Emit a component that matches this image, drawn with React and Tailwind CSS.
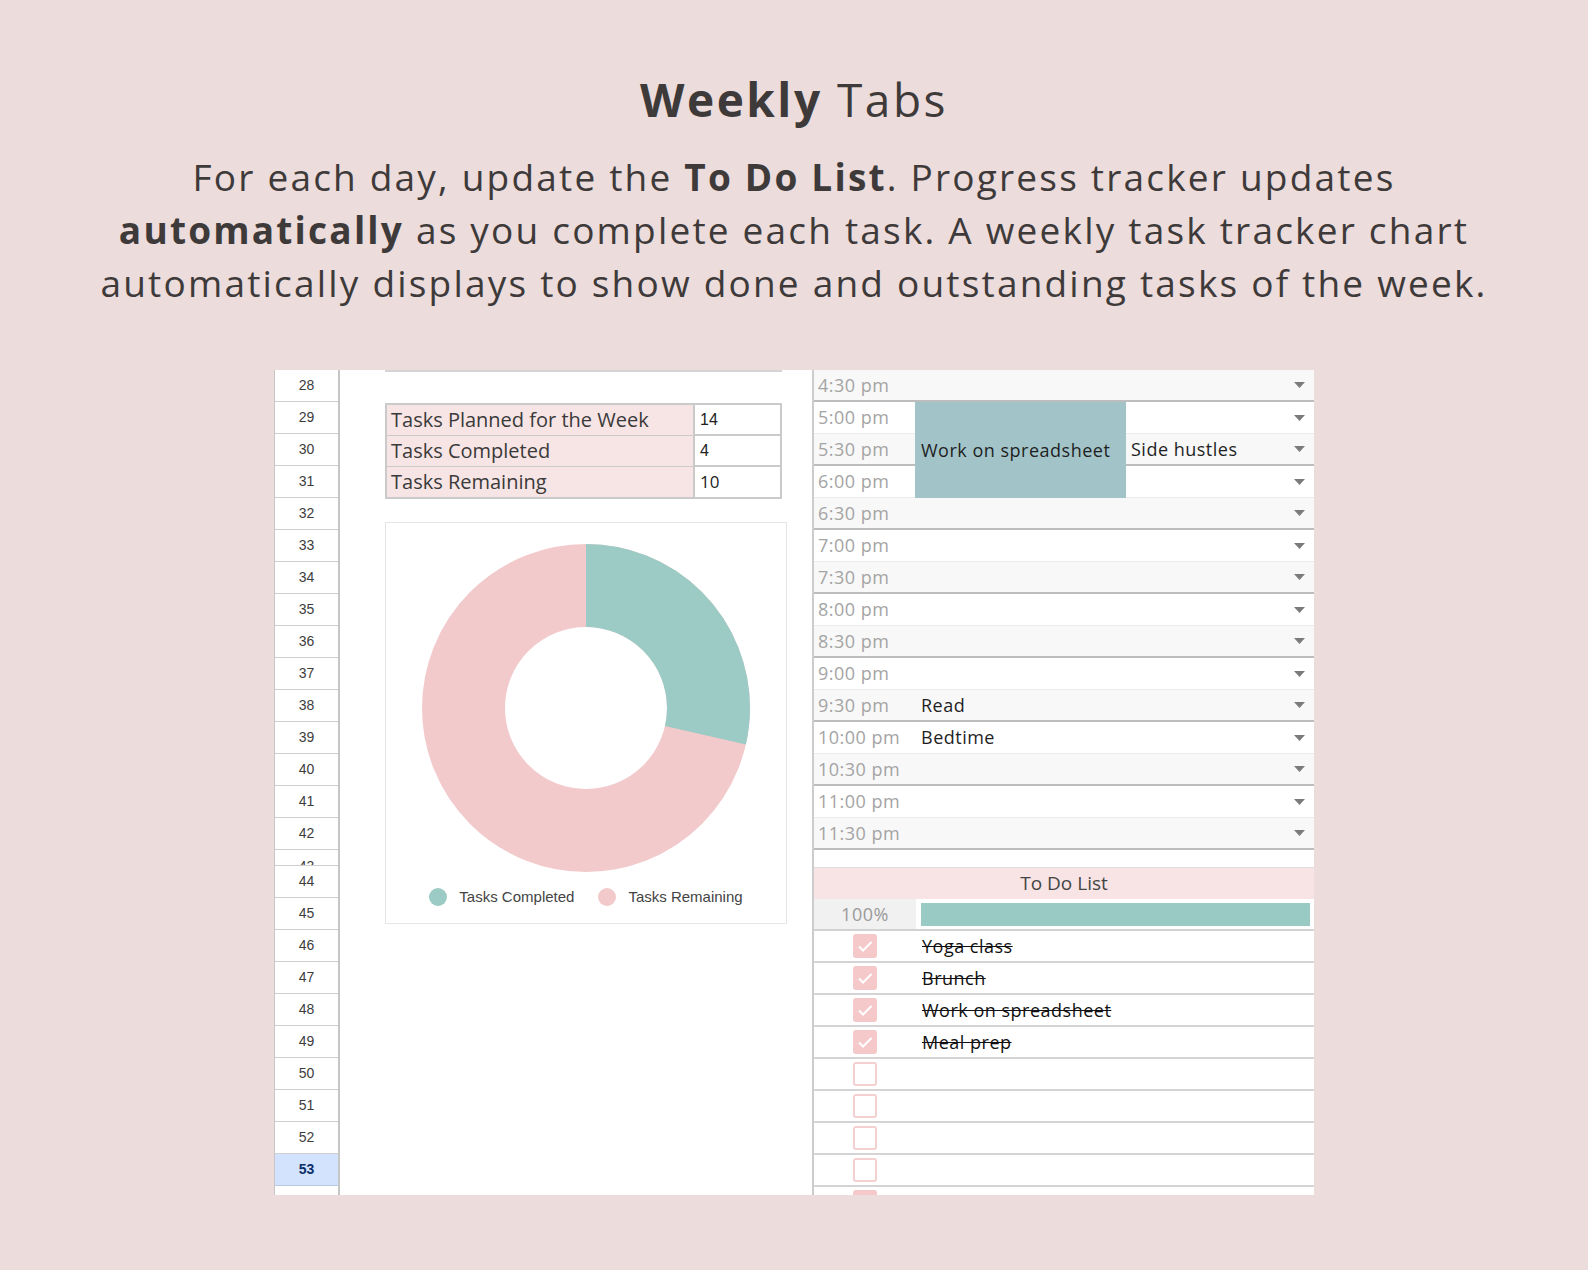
import React from "react";

const heading = { fontFamily: '"Open Sans", "Noto Sans", sans-serif' };
const sheetFont = { fontFamily: '"Open Sans", "Noto Sans", sans-serif' };
const arial = { fontFamily: '"Liberation Sans", Arial, sans-serif' };

const times = [
  "4:30 pm",
  "5:00 pm",
  "5:30 pm",
  "6:00 pm",
  "6:30 pm",
  "7:00 pm",
  "7:30 pm",
  "8:00 pm",
  "8:30 pm",
  "9:00 pm",
  "9:30 pm",
  "10:00 pm",
  "10:30 pm",
  "11:00 pm",
  "11:30 pm",
];

const tasks = { "9:30 pm": "Read", "10:00 pm": "Bedtime" };

const todos = [
  { text: "Yoga class", done: true },
  { text: "Brunch", done: true },
  { text: "Work on spreadsheet", done: true },
  { text: "Meal prep", done: true },
  { text: "", done: false },
  { text: "", done: false },
  { text: "", done: false },
  { text: "", done: false },
  { text: "", done: true },
];

function rowCls(time) {
  return time.includes(":30")
    ? "h-[32px] shrink-0 flex items-center bg-[#f8f8f8] border-b-2 border-[#bdbdbd]"
    : "h-[32px] shrink-0 flex items-center bg-white border-b border-[#ececec]";
}

function Arrow() {
  return (
    <svg width="11" height="6" viewBox="0 0 11 6" className="shrink-0 mr-[9px]">
      <path d="M0 0h11L5.5 6z" fill="#7b7b7b" />
    </svg>
  );
}

function RowHeaders() {
  const first = [];
  for (let n = 28; n <= 42; n++) first.push(n);
  const second = [];
  for (let n = 44; n <= 53; n++) second.push(n);
  return (
    <div
      className="w-[66px] shrink-0 flex flex-col border-l border-r-2 border-[#c6c6c6] text-[14px] text-[#3d3d3d]"
      style={arial}
    >
      {first.map((n) => (
        <div key={n} className="h-[32px] shrink-0 flex items-center justify-center border-b border-[#cfcfcf] bg-white">
          {n}
        </div>
      ))}
      <div className="h-[16px] shrink-0 overflow-hidden border-b border-[#cfcfcf] bg-white flex justify-center pt-[6px]">
        43
      </div>
      {second.map((n) =>
        n === 53 ? (
          <div key={n} className="h-[32px] shrink-0 flex items-center justify-center border-b border-[#b9c9e0] bg-[#d3e3fd] font-bold text-[#0b2f6b]">
            {n}
          </div>
        ) : (
          <div key={n} className="h-[32px] shrink-0 flex items-center justify-center border-b border-[#cfcfcf] bg-white">
            {n}
          </div>
        )
      )}
      <div className="flex-1 bg-white" />
    </div>
  );
}

function Donut() {
  const r = 122.5;
  const c = 2 * Math.PI * r;
  const done = (c * 4) / 14;
  return (
    <svg width="330" height="330" viewBox="0 0 330 330" className="mt-[20px] shrink-0">
      <circle cx="165" cy="165" r={r} fill="none" stroke="#f2cacc" strokeWidth="83" />
      <circle
        cx="165"
        cy="165"
        r={r}
        fill="none"
        stroke="#9bcbc4"
        strokeWidth="83"
        strokeDasharray={`${done} ${c}`}
        transform="rotate(-90 165 165)"
      />
    </svg>
  );
}

function LeftPanel() {
  const rows = [
    ["Tasks Planned for the Week", "14", arial, "text-[16px]"],
    ["Tasks Completed", "4", arial, "text-[16px]"],
    ["Tasks Remaining", "10", sheetFont, "text-[17px]"],
  ];
  return (
    <div className="w-[472px] shrink-0 flex flex-col bg-white" style={sheetFont}>
      <div className="ml-[45px] w-[397px] h-[2px] shrink-0 bg-[#d4d4d4]" />
      <div className="ml-[45px] mt-[31px] w-[397px] shrink-0 border-2 border-[#cacaca]">
        {rows.map(([label, val, font, size], i) => (
          <div
            key={label}
            className={
              i < 2
                ? "h-[31px] grid grid-cols-[308px_1fr] border-b-2 border-[#cacaca]"
                : "h-[30px] grid grid-cols-[308px_1fr]"
            }
          >
            <div className="bg-[#f7e5e5] border-r-2 border-[#cacaca] pl-[4px] flex items-center text-[20px] text-[#3a3a3a]">
              {label}
            </div>
            <div className={"flex items-center pl-[5px] text-[#222] " + size} style={font}>
              {val}
            </div>
          </div>
        ))}
      </div>
      <div className="ml-[45px] mt-[23px] w-[402px] h-[402px] shrink-0 border border-[#e6e6e6] flex flex-col items-center">
        <Donut />
        <div className="mt-[13px] flex items-center text-[15px] text-[#444]" style={arial}>
          <span className="w-[18px] h-[18px] rounded-full bg-[#9bcbc4]" />
          <span className="ml-[12px]">Tasks Completed</span>
          <span className="ml-[24px] w-[18px] h-[18px] rounded-full bg-[#f2cacc]" />
          <span className="ml-[12px]">Tasks Remaining</span>
        </div>
      </div>
    </div>
  );
}

function Check({ done }) {
  if (done) {
    return (
      <div className="w-[24px] h-[24px] rounded-[3px] bg-[#f5c8c9] flex items-center justify-center">
        <svg width="16" height="12" viewBox="0 0 16 12">
          <path d="M2 6.5l4 4L14.5 2" fill="none" stroke="#ffffff" strokeWidth="2" />
        </svg>
      </div>
    );
  }
  return <div className="w-[24px] h-[24px] rounded-[3px] border-2 border-[#f4cfcf] bg-white" />;
}

function RightPanel() {
  const before = times.slice(0, 1);
  const block = times.slice(1, 4);
  const after = times.slice(4);
  return (
    <div className="flex-1 flex flex-col border-l-2 border-[#cccccc] bg-white text-[18px] tracking-[0.5px]" style={sheetFont}>
      {before.map((t) => (
        <div key={t} className={rowCls(t)}>
          <div className="w-[101px] pl-[4px] text-[#a4a4a4]">{t}</div>
          <div className="flex-1" />
          <Arrow />
        </div>
      ))}
      <div className="flex h-[96px] shrink-0">
        <div className="w-[101px] flex flex-col">
          {block.map((t) => (
            <div key={t} className={rowCls(t) + " pl-[4px] text-[#a4a4a4]"}>
              {t}
            </div>
          ))}
        </div>
        <div className="w-[211px] bg-[#a2c4c9] flex items-center pl-[6px] text-[#1f1f1f]">Work on spreadsheet</div>
        <div className="flex-1 flex flex-col">
          {block.map((t) => (
            <div key={t} className={rowCls(t)}>
              <div className="flex-1 pl-[5px] text-[#1f1f1f]">{t === "5:30 pm" ? "Side hustles" : ""}</div>
              <Arrow />
            </div>
          ))}
        </div>
      </div>
      {after.map((t) => (
        <div key={t} className={rowCls(t)}>
          <div className="w-[101px] pl-[4px] text-[#a4a4a4]">{t}</div>
          <div className="flex-1 pl-[6px] text-[#1f1f1f]">{tasks[t] || ""}</div>
          <Arrow />
        </div>
      ))}
      <div className="h-[17px] shrink-0 bg-white" />
      <div className="h-[32px] shrink-0 flex items-center justify-center bg-[#f8e4e4] border-t border-[#dedede] text-[19px] tracking-normal text-[#444]">
        To Do List
      </div>
      <div className="h-[32px] shrink-0 flex border-b-2 border-[#d2d2d2]">
        <div className="w-[102px] bg-[#f1f1f1] flex items-center justify-center text-[#9a9a9a]">100%</div>
        <div className="flex-1 pl-[5px] pr-[4px] pt-[4px] pb-[3px]">
          <div className="h-full bg-[#99cbc4]" />
        </div>
      </div>
      {todos.map((td, i) => (
        <div key={i} className="h-[32px] shrink-0 flex items-center border-b-2 border-[#d4d4d4]">
          <div className="w-[102px] flex justify-center">
            <Check done={td.done} />
          </div>
          <div className="flex-1 pl-[6px] text-[#111] line-through">{td.text}</div>
        </div>
      ))}
    </div>
  );
}

export default function App() {
  return (
    <div className="w-full h-[1270px] bg-[#ecdcdc] flex flex-col items-center text-[#3e3a3a]" style={heading}>
      <h1 className="pt-[76px] text-[46px] leading-[46px] tracking-[2.5px] whitespace-nowrap">
        <span className="font-bold">Weekly</span> Tabs
      </h1>
      <div className="mt-[28px] text-[37px] leading-[53px] tracking-[2.2px] text-center">
        <div className="whitespace-nowrap">
          For each day, update the <span className="font-bold">To Do List</span>. Progress tracker updates
        </div>
        <div className="whitespace-nowrap">
          <span className="font-bold">automatically</span> as you complete each task. A weekly task tracker chart
        </div>
        <div className="whitespace-nowrap">automatically displays to show done and outstanding tasks of the week.</div>
      </div>
      <div className="mt-[61px] w-[1040px] h-[825px] flex overflow-hidden">
        <RowHeaders />
        <LeftPanel />
        <RightPanel />
      </div>
    </div>
  );
}
